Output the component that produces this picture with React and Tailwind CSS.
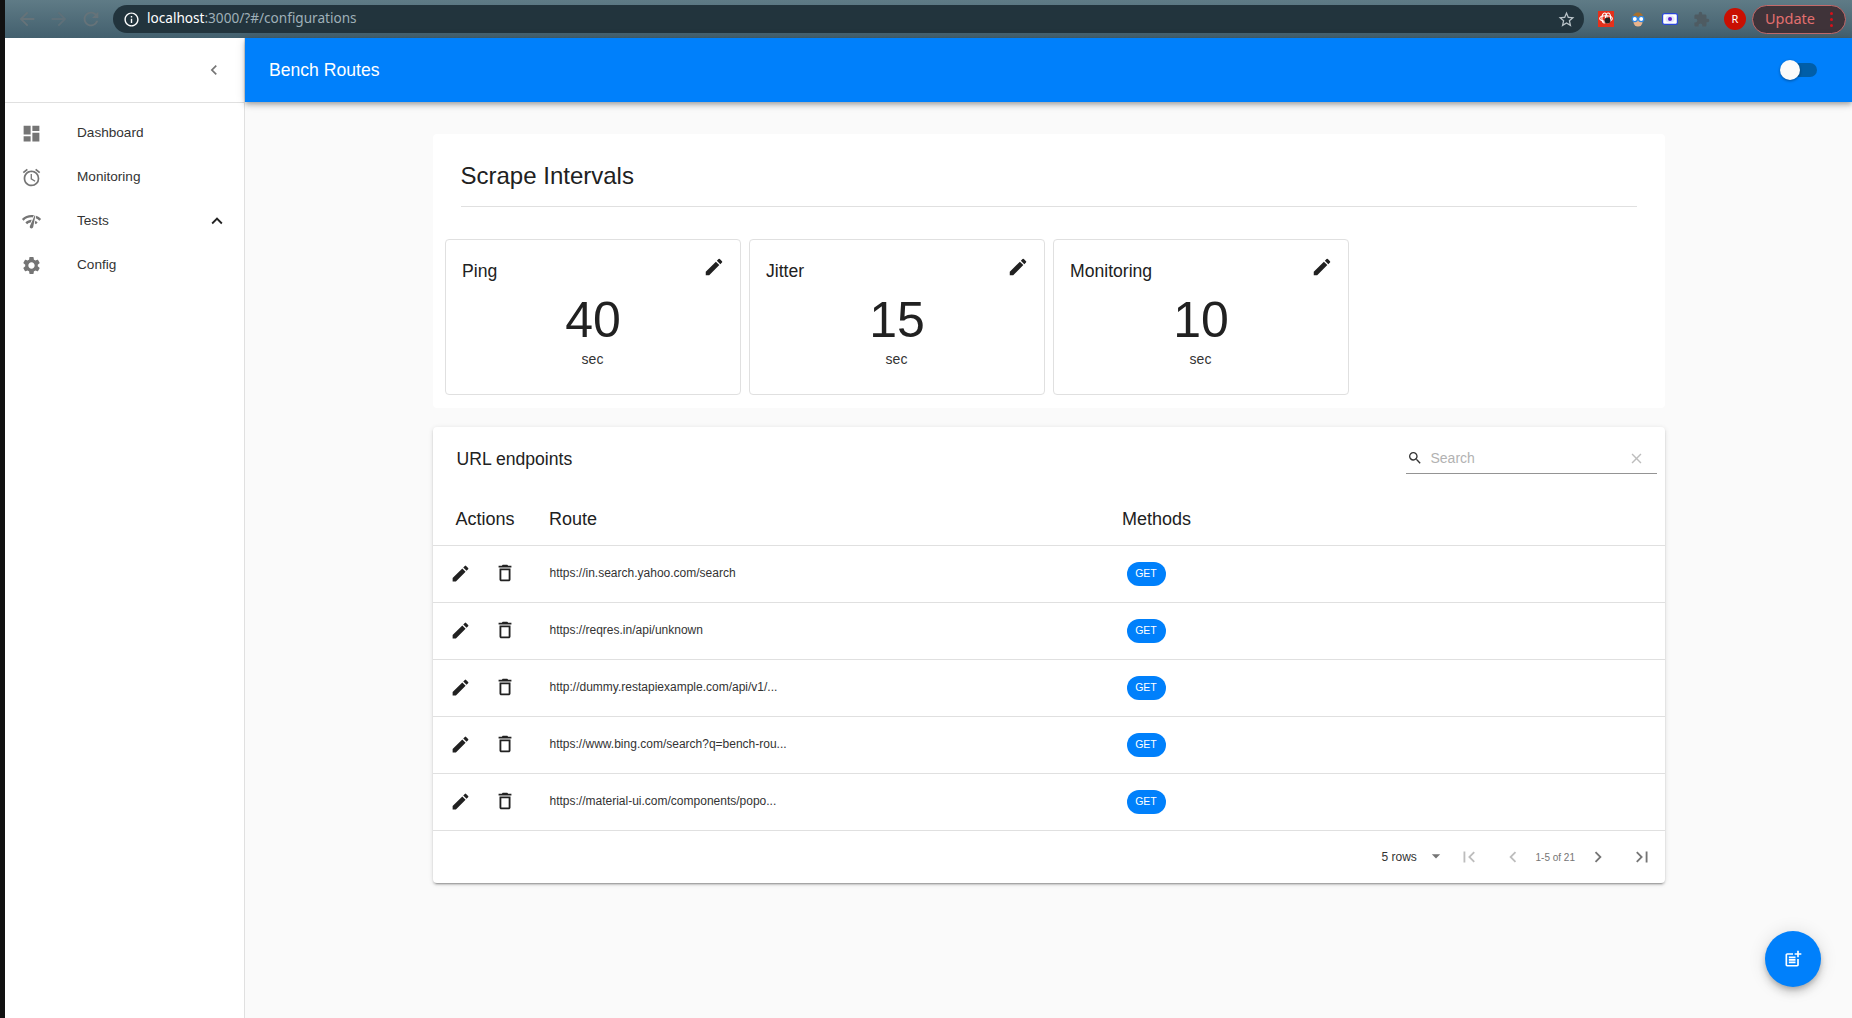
import React from 'react';
import {
  MdArrowBack,
  MdArrowDropDown,
  MdArrowForward,
  MdAccessAlarm,
  MdChevronLeft,
  MdChevronRight,
  MdClear,
  MdDashboard,
  MdDeleteOutline,
  MdEdit,
  MdExpandLess,
  MdExtension,
  MdFirstPage,
  MdInfoOutline,
  MdLastPage,
  MdNetworkCheck,
  MdPostAdd,
  MdRefresh,
  MdSearch,
  MdSettings,
  MdStarBorder,
} from 'react-icons/md';

const navItems = [
  { label: 'Dashboard', Icon: MdDashboard },
  { label: 'Monitoring', Icon: MdAccessAlarm },
  { label: 'Tests', Icon: MdNetworkCheck, open: true },
  { label: 'Config', Icon: MdSettings },
];

const intervals = [
  { label: 'Ping', value: 40 },
  { label: 'Jitter', value: 15 },
  { label: 'Monitoring', value: 10 },
];

const routes = [
  'https://in.search.yahoo.com/search',
  'https://reqres.in/api/unknown',
  'http://dummy.restapiexample.com/api/v1/...',
  'https://www.bing.com/search?q=bench-rou...',
  'https://material-ui.com/components/popo...',
];

const BrowserBar = () => {
  return (
    <div className="flex h-[38px] shrink-0 items-center bg-gradient-to-b from-[#5f7b86] to-[#43606e] font-['Noto_Sans',sans-serif]">
      {/* Back, forward, reload */}
      <div className="flex w-[108px] shrink-0 items-center pl-[11px] text-[#667379]">
        <MdArrowBack size={22} />
        <MdArrowForward size={22} className="ml-[10px] text-[#5f7079]" />
        <MdRefresh size={22} className="ml-[10px]" />
      </div>
      {/* Address bar */}
      <div className="flex h-[28px] w-[1471px] shrink-0 items-center rounded-full bg-[#22343d] pl-[10px] pr-[8px]">
        <MdInfoOutline size={17} className="text-white" />
        <div className="ml-[7px] flex-1 -translate-y-px text-[13.6px] text-[#9fb0b8]">
          <span className="text-white">localhost</span>:3000/?#/configurations
        </div>
        <MdStarBorder size={19} className="text-[#b9c3c8]" />
      </div>
      {/* Extensions */}
      <div className="ml-[14px] flex h-[16px] w-[16px] shrink-0 items-center justify-center bg-[#e5301b]">
        <svg width="16" height="16" viewBox="0 0 16 16" fill="none">
          <ellipse cx="8" cy="7.5" rx="6.3" ry="2.8" stroke="#fff" strokeWidth="1.1" />
          <ellipse cx="6.5" cy="7" rx="2.6" ry="5" stroke="#fff" strokeWidth="1.1" />
          <ellipse cx="10" cy="7" rx="2.6" ry="5" stroke="#fff" strokeWidth="1.1" />
          <circle cx="9.5" cy="9.5" r="3" fill="#222" />
        </svg>
      </div>
      <svg width="16" height="16" viewBox="0 0 16 16" className="ml-[16px] shrink-0">
        <path d="M3 6 C3 0 13 0 13 6 L13 10 L3 10 Z" fill="#a8702c" />
        <circle cx="8" cy="11" r="4.5" fill="#eab48c" />
        <circle cx="4.8" cy="8" r="2.6" fill="#fff" stroke="#2f86e0" strokeWidth="1.3" />
        <circle cx="11.2" cy="8" r="2.6" fill="#fff" stroke="#2f86e0" strokeWidth="1.3" />
      </svg>
      <svg width="16" height="12" viewBox="0 0 16 12" className="ml-[16px] shrink-0">
        <rect x="0.6" y="0.6" width="14.8" height="10.8" rx="2" fill="#fff" stroke="#2a46d8" strokeWidth="1.2" />
        <ellipse cx="8" cy="6" rx="4.5" ry="3.6" fill="#e3e6fb" />
        <circle cx="8" cy="6" r="2" fill="#5a1fd0" />
      </svg>
      <MdExtension size={17} className="ml-[15px] shrink-0 text-[#4e5b62]" />
      <div className="ml-[14px] flex h-[22px] w-[22px] shrink-0 items-center justify-center rounded-full bg-[#c90f02] text-[11px] text-white">
        R
      </div>
      <div className="ml-[6px] flex h-[29px] w-[94px] shrink-0 items-center rounded-full border border-[#c46a6b] bg-[#3f3339] pl-[12px] text-[14.5px] text-[#e26f6f]">
        <span>Update</span>
        <span className="ml-[15px] flex flex-col gap-[3px]">
          <i className="block h-[3px] w-[3px] rounded-full bg-[#d8101a]" />
          <i className="block h-[3px] w-[3px] rounded-full bg-[#d8101a]" />
          <i className="block h-[3px] w-[3px] rounded-full bg-[#d8101a]" />
        </span>
      </div>
    </div>
  );
};

const Sidebar = () => {
  return (
    <div className="w-[240px] shrink-0 border-r border-[#e0e0e0] bg-white">
      <div className="flex h-[65px] items-center justify-end border-b border-[#e0e0e0] pr-[20px] text-[#757575]">
        <MdChevronLeft size={20} />
      </div>
      <ul className="pt-[8px]">
        {navItems.map(({ label, Icon, open }) => (
          <li key={label} className="flex h-[44px] items-center pl-[16px] text-[13.6px] text-[#333]">
            <Icon size={21} className="text-[#757575]" />
            <span className="ml-[35px] flex-1">{label}</span>
            {open && <MdExpandLess size={22} className="mr-[16px] text-[#222]" />}
          </li>
        ))}
      </ul>
    </div>
  );
};

const IntervalCard = ({ label, value }) => {
  return (
    <div className="h-[156px] w-[296px] rounded-[4px] border border-[#e0e0e0] bg-white">
      <div className="flex h-[44px] items-start justify-between pl-[16.5px] pr-[15px] pt-[16px]">
        <span className="mt-[2px] text-[17.6px] leading-[26px] text-[#212121]">{label}</span>
        <MdEdit size={22} className="text-[#212121]" />
      </div>
      <div className="mt-[8px] pl-[1px] text-center text-[50px] leading-[56px] text-[#212121]">{value}</div>
      <div className="mt-[1px] text-center text-[14px] leading-[20px] text-[#333]">sec</div>
    </div>
  );
};

const RouteRow = ({ route }) => {
  return (
    <div className="flex h-[57px] items-center border-t border-[#e0e0e0]">
      <MdEdit size={21} className="ml-[17px] shrink-0 -translate-y-px text-[#212121]" />
      <MdDeleteOutline size={22} className="ml-[23px] shrink-0 -translate-y-px text-[#212121]" />
      <span className="ml-[34px] w-[573px] shrink-0 -translate-y-px text-[12px] text-[#333]">{route}</span>
      <span className="ml-[4px] flex h-[24px] w-[39px] items-center justify-center rounded-full bg-[#0080fb] text-[10.5px] text-white">
        GET
      </span>
    </div>
  );
};

const RoutesTable = () => {
  return (
    <div className="mt-[19px] rounded-[4px] bg-white shadow-[0_3px_1px_-2px_rgba(0,0,0,0.2),0_2px_2px_0_rgba(0,0,0,0.14),0_1px_5px_0_rgba(0,0,0,0.12)]">
      {/* Toolbar */}
      <div className="flex h-[65px] items-center justify-between pl-[24px] pr-[8px]">
        <span className="text-[17.6px] text-[#212121]">URL endpoints</span>
        <div className="mt-[-2px] flex h-[30px] w-[251px] items-center border-b border-[#949494] pl-[1px] pr-[12px]">
          <MdSearch size={16} className="text-[#333]" />
          <span className="ml-[8px] flex-1 text-[14px] text-[#b2b2b2]">Search</span>
          <MdClear size={17} className="text-[#bdbdbd]" />
        </div>
      </div>
      {/* Header */}
      <div className="flex h-[53px] items-center pt-[2px] text-[18px] text-[#212121]">
        <span className="ml-[23px] w-[93.5px]">Actions</span>
        <span className="w-[573px]">Route</span>
        <span>Methods</span>
      </div>
      {routes.map((route) => (
        <RouteRow key={route} route={route} />
      ))}
      {/* Pagination */}
      <div className="flex h-[53px] items-center border-t border-[#e0e0e0] pl-[949px] text-[#757575]">
        <span className="w-[36px] text-[12px] text-[#333]">5 rows</span>
        <MdArrowDropDown size={20} className="ml-[8px] -translate-y-px" />
        <MdFirstPage size={22} className="ml-[12px] text-[#bdbdbd]" />
        <MdChevronLeft size={22} className="ml-[22px] text-[#bdbdbd]" />
        <span className="ml-[12px] w-[40px] whitespace-nowrap text-[10px]">1-5 of 21</span>
        <MdChevronRight size={22} className="ml-[11px]" />
        <MdLastPage size={22} className="ml-[22px]" />
      </div>
    </div>
  );
};

const App = () => {
  return (
    <div className="flex h-[1018px] w-full overflow-hidden bg-[#fafafa] font-['Liberation_Sans',Arial,sans-serif]">
      <div className="w-[5px] shrink-0 bg-[#111]" />
      <div className="flex min-w-0 flex-1 flex-col">
        <BrowserBar />
        <div className="flex min-h-0 flex-1">
          <Sidebar />
          <div className="min-w-0 flex-1">
            <div className="flex h-[64px] items-center justify-between bg-[#0080fb] pl-[24px] pr-[35px] shadow-[0_2px_4px_-1px_rgba(0,0,0,0.2),0_4px_5px_0_rgba(0,0,0,0.14),0_1px_10px_0_rgba(0,0,0,0.12)]">
              <span className="text-[17.6px] text-white">Bench Routes</span>
              {/* Theme switch */}
              <div className="relative h-[14px] w-[34px] rounded-full bg-[#005ea8]">
                <span className="absolute left-[-3px] top-[-3px] h-[20px] w-[20px] rounded-full bg-[#fafafa] shadow-[0_1px_3px_rgba(0,0,0,0.4)]" />
              </div>
            </div>
            <div className="mx-auto mt-[32px] w-[1232px]">
              {/* Scrape intervals */}
              <div className="h-[274px] rounded-[4px] bg-white">
                <div className="mx-[28px] flex h-[73px] items-center border-b border-[#e0e0e0] pt-[12px] text-[24px] text-[#212121]">
                  Scrape Intervals
                </div>
                <div className="ml-[12px] mt-[32px] flex gap-[8px]">
                  {intervals.map((item) => (
                    <IntervalCard key={item.label} {...item} />
                  ))}
                </div>
              </div>
              <RoutesTable />
            </div>
          </div>
        </div>
      </div>
      {/* Add route button */}
      <button className="fixed left-[1765px] top-[931px] flex h-[56px] w-[56px] items-center justify-center rounded-full bg-[#0080fb] text-white shadow-[0_3px_5px_-1px_rgba(0,0,0,0.2),0_6px_10px_0_rgba(0,0,0,0.14),0_1px_18px_0_rgba(0,0,0,0.12)]">
        <MdPostAdd size={20} />
      </button>
    </div>
  );
};

export default App;
